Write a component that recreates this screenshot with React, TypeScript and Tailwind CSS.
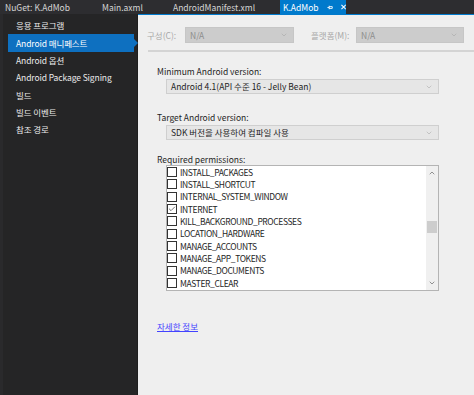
import { ChevronDown, ChevronUp, Check } from 'lucide-react';

const font = { fontFamily: '"Noto Sans CJK KR", "Noto Sans", sans-serif' };

const navItems = [
  '응용 프로그램',
  'Android 매니페스트',
  'Android 옵션',
  'Android Package Signing',
  '빌드',
  '빌드 이벤트',
  '참조 경로',
];

const permissions = [
  { name: 'INSTALL_PACKAGES', checked: false },
  { name: 'INSTALL_SHORTCUT', checked: false },
  { name: 'INTERNAL_SYSTEM_WINDOW', checked: false },
  { name: 'INTERNET', checked: true },
  { name: 'KILL_BACKGROUND_PROCESSES', checked: false },
  { name: 'LOCATION_HARDWARE', checked: false },
  { name: 'MANAGE_ACCOUNTS', checked: false },
  { name: 'MANAGE_APP_TOKENS', checked: false },
  { name: 'MANAGE_DOCUMENTS', checked: false },
  { name: 'MASTER_CLEAR', checked: false },
];

function Combo({ value, disabled, className }: { value: string; disabled?: boolean; className: string }) {
  return (
    <div
      className={`flex items-center border pl-[4px] pr-[5px] ${
        disabled ? 'bg-[#cccccc] border-[#c6c6c6] text-[#8c8c8c]' : 'bg-[#e6e6e6] border-[#cfcfcf] text-[#1e1e1e]'
      } ${className}`}
    >
      <span className="flex-1 text-[8.5px] leading-none whitespace-nowrap">{value}</span>
      <ChevronDown className="w-[8px] h-[8px] text-[#a0a0a0]" strokeWidth={1.5} />
    </div>
  );
}

export default function App() {
  return (
    <div className="w-[474px] h-[395px] flex flex-col bg-[#2d2d30] overflow-hidden" style={font}>
      {/* Tab strip */}
      <div className="h-[14px] flex items-stretch text-[8.5px] text-[#d4d4d4] leading-none">
        <div className="w-[102px] pl-[5px] flex items-center">NuGet: K.AdMob</div>
        <div className="w-[71px] flex items-center">Main.axml</div>
        <div className="w-[107px] flex items-center">AndroidManifest.xml</div>
        <div className="w-[66px] bg-[#007acc] text-white flex items-center pl-[3px] gap-[8px]">
          <span>K.AdMob</span>
          <svg width="7" height="7" viewBox="0 0 7 7">
            <path d="M0.5 3.5h2M2.5 1.5v4M2.5 2.5h3.5v2H2.5" stroke="white" strokeWidth="1" fill="none" />
          </svg>
          <svg width="6" height="6" viewBox="0 0 6 6">
            <path d="M0.5 0.5l5 5M5.5 0.5l-5 5" stroke="white" strokeWidth="1.2" />
          </svg>
        </div>
      </div>

      <div className="flex flex-1 min-h-0">
        {/* Sidebar */}
        <div className="w-[138px] bg-[#252526] border-l-[3px] border-l-[#2a2a2c] border-r border-r-[#1e1e1e] pt-[3px] flex flex-col">
          {navItems.map((item, i) => (
            <div
              key={item}
              className={`relative h-[17.3px] flex items-center pl-[8px] ml-[5px] mr-[3px] text-[8.5px] leading-none whitespace-nowrap tracking-[-0.1px] ${
                i === 1 ? 'bg-[#0e70c0] text-white' : 'text-[#ececec]'
              }`}
            >
              {item}
              {i === 1 && (
                <div className="absolute right-[-4px] top-[4.5px] w-0 h-0 border-y-[4px] border-y-transparent border-l-[4px] border-l-[#0e70c0]" />
              )}
            </div>
          ))}
        </div>

        {/* Main panel */}
        <div className="flex-1 bg-[#efefef] border-t border-t-[#007acc] flex flex-col">
          <div className="pt-[12px] pb-[7px] flex items-center pl-[9px] text-[8.5px] leading-none text-[#a8a8a8]">
            <span className="w-[38px]">구성(C):</span>
            <Combo value="N/A" disabled className="w-[109px] h-[16px]" />
            <span className="ml-[17px] w-[45px]">플랫폼(M):</span>
            <Combo value="N/A" disabled className="w-[108px] h-[16px]" />
          </div>
          <div className="h-[2px] ml-[10px] bg-[#d4d4d4]" />

          <div className="pl-[19px] pr-[35px] text-[#1e1e1e]">
            <div className="h-[10px] flex items-center text-[8.5px] leading-none mt-[14px]">Minimum Android version:</div>
            <Combo value="Android 4.1(API 수준 16 - Jelly Bean)" className="ml-[9px] mt-[3px] h-[15px]" />

            <div className="h-[10px] flex items-center text-[8.5px] leading-none mt-[18px]">Target Android version:</div>
            <Combo value="SDK 버전을 사용하여 컴파일 사용" className="ml-[9px] mt-[3px] h-[15px]" />

            <div className="h-[10px] flex items-center text-[8.5px] leading-none mt-[14px]">Required permissions:</div>
            <div className="ml-[9px] mt-[1px] h-[126px] bg-white border border-[#b4b4b4] flex">
              <div className="flex-1">
                {permissions.map((p) => (
                  <div key={p.name} className="h-[12.3px] flex items-center gap-[3px] text-[8.5px] leading-none tracking-[-0.4px] text-[#1e1e1e]">
                    <div className="w-[10px] h-[10px] border border-[#333333] bg-white flex items-center justify-center">
                      {p.checked && <Check className="w-[8px] h-[8px] text-[#333333]" strokeWidth={2} />}
                    </div>
                    <span>{p.name}</span>
                  </div>
                ))}
              </div>
              <div className="w-[12px] bg-[#f0f0f0] relative">
                <ChevronUp className="absolute top-[3px] left-[2px] w-[8px] h-[8px] text-[#606060]" strokeWidth={2} />
                <div className="absolute top-[55px] left-[1px] w-[10px] h-[12px] bg-[#cdcdcd]" />
                <ChevronDown className="absolute bottom-[3px] left-[2px] w-[8px] h-[8px] text-[#606060]" strokeWidth={2} />
              </div>
            </div>

            <div className="h-[10px] flex items-center mt-[30px]">
              <a className="text-[8.5px] leading-none text-[#4343ff] underline">자세한 정보</a>
            </div>
          </div>
        </div>
      </div>
    </div>
  );
}
